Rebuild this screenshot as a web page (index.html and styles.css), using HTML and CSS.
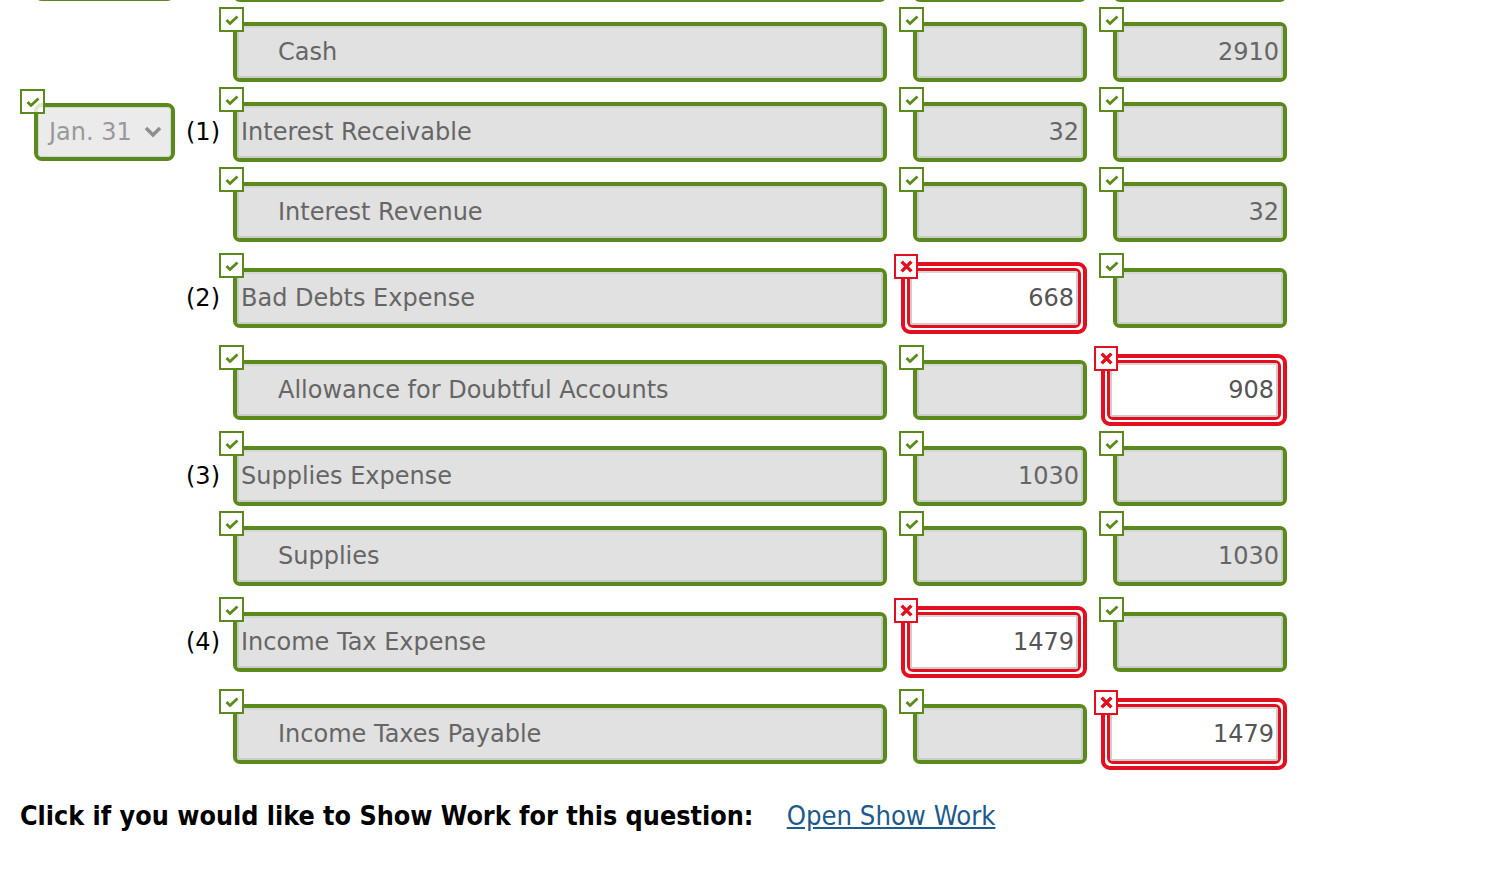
FILE: index.html
```html
<!DOCTYPE html>
<html lang="en">
<head>
<meta charset="UTF-8">
<title>Journal Entries</title>
<link rel="stylesheet" href="styles.css">
</head>
<body>

<div class="journal">

  <!-- previous entry, scrolled out of view except its bottom edge -->
  <div class="entry">
    <div class="date-cell">
      <div class="pick"><div class="pick-in"></div></div>
    </div>
    <div class="ref"></div>
    <div class="field"><div class="box"></div></div>
    <div class="amt"><div class="field num"><div class="box"></div></div></div>
    <div class="amt"><div class="field num"><div class="box"></div></div></div>
  </div>

  <div class="entry">
    <div class="date-cell"></div>
    <div class="ref"></div>
    <div class="field"><span class="mark"><svg viewBox="0 0 14 10"><polyline points="1.5,5 5,8.5 12.5,1.5"/></svg></span><div class="box credit">Cash</div></div>
    <div class="amt"><div class="field num"><span class="mark"><svg viewBox="0 0 14 10"><polyline points="1.5,5 5,8.5 12.5,1.5"/></svg></span><div class="box"></div></div></div>
    <div class="amt"><div class="field num"><span class="mark"><svg viewBox="0 0 14 10"><polyline points="1.5,5 5,8.5 12.5,1.5"/></svg></span><div class="box">2910</div></div></div>
  </div>

  <div class="entry">
    <div class="date-cell">
      <div class="pick"><span class="mark faded"><svg viewBox="0 0 14 10"><polyline points="1.5,5 5,8.5 12.5,1.5"/></svg></span><div class="pick-in">Jan. 31 <svg class="chev" viewBox="0 0 18 12"><polyline points="2,2 9,9 16,2"/></svg></div></div>
    </div>
    <div class="ref">(1)</div>
    <div class="field"><span class="mark"><svg viewBox="0 0 14 10"><polyline points="1.5,5 5,8.5 12.5,1.5"/></svg></span><div class="box">Interest Receivable</div></div>
    <div class="amt"><div class="field num"><span class="mark"><svg viewBox="0 0 14 10"><polyline points="1.5,5 5,8.5 12.5,1.5"/></svg></span><div class="box">32</div></div></div>
    <div class="amt"><div class="field num"><span class="mark"><svg viewBox="0 0 14 10"><polyline points="1.5,5 5,8.5 12.5,1.5"/></svg></span><div class="box"></div></div></div>
  </div>

  <div class="entry">
    <div class="date-cell"></div>
    <div class="ref"></div>
    <div class="field"><span class="mark"><svg viewBox="0 0 14 10"><polyline points="1.5,5 5,8.5 12.5,1.5"/></svg></span><div class="box credit">Interest Revenue</div></div>
    <div class="amt"><div class="field num"><span class="mark"><svg viewBox="0 0 14 10"><polyline points="1.5,5 5,8.5 12.5,1.5"/></svg></span><div class="box"></div></div></div>
    <div class="amt"><div class="field num"><span class="mark"><svg viewBox="0 0 14 10"><polyline points="1.5,5 5,8.5 12.5,1.5"/></svg></span><div class="box">32</div></div></div>
  </div>

  <div class="entry">
    <div class="date-cell"></div>
    <div class="ref">(2)</div>
    <div class="field"><span class="mark"><svg viewBox="0 0 14 10"><polyline points="1.5,5 5,8.5 12.5,1.5"/></svg></span><div class="box">Bad Debts Expense</div></div>
    <div class="amt"><div class="field num bad"><span class="mark"><svg viewBox="0 0 12 12"><path d="M1.5 1.5 L10.5 10.5 M10.5 1.5 L1.5 10.5"/></svg></span><div class="ring"><div class="box">668</div></div></div></div>
    <div class="amt"><div class="field num"><span class="mark"><svg viewBox="0 0 14 10"><polyline points="1.5,5 5,8.5 12.5,1.5"/></svg></span><div class="box"></div></div></div>
  </div>

  <div class="entry">
    <div class="date-cell"></div>
    <div class="ref"></div>
    <div class="field"><span class="mark"><svg viewBox="0 0 14 10"><polyline points="1.5,5 5,8.5 12.5,1.5"/></svg></span><div class="box credit">Allowance for Doubtful Accounts</div></div>
    <div class="amt"><div class="field num"><span class="mark"><svg viewBox="0 0 14 10"><polyline points="1.5,5 5,8.5 12.5,1.5"/></svg></span><div class="box"></div></div></div>
    <div class="amt"><div class="field num bad"><span class="mark"><svg viewBox="0 0 12 12"><path d="M1.5 1.5 L10.5 10.5 M10.5 1.5 L1.5 10.5"/></svg></span><div class="ring"><div class="box">908</div></div></div></div>
  </div>

  <div class="entry">
    <div class="date-cell"></div>
    <div class="ref">(3)</div>
    <div class="field"><span class="mark"><svg viewBox="0 0 14 10"><polyline points="1.5,5 5,8.5 12.5,1.5"/></svg></span><div class="box">Supplies Expense</div></div>
    <div class="amt"><div class="field num"><span class="mark"><svg viewBox="0 0 14 10"><polyline points="1.5,5 5,8.5 12.5,1.5"/></svg></span><div class="box">1030</div></div></div>
    <div class="amt"><div class="field num"><span class="mark"><svg viewBox="0 0 14 10"><polyline points="1.5,5 5,8.5 12.5,1.5"/></svg></span><div class="box"></div></div></div>
  </div>

  <div class="entry">
    <div class="date-cell"></div>
    <div class="ref"></div>
    <div class="field"><span class="mark"><svg viewBox="0 0 14 10"><polyline points="1.5,5 5,8.5 12.5,1.5"/></svg></span><div class="box credit">Supplies</div></div>
    <div class="amt"><div class="field num"><span class="mark"><svg viewBox="0 0 14 10"><polyline points="1.5,5 5,8.5 12.5,1.5"/></svg></span><div class="box"></div></div></div>
    <div class="amt"><div class="field num"><span class="mark"><svg viewBox="0 0 14 10"><polyline points="1.5,5 5,8.5 12.5,1.5"/></svg></span><div class="box">1030</div></div></div>
  </div>

  <div class="entry">
    <div class="date-cell"></div>
    <div class="ref">(4)</div>
    <div class="field"><span class="mark"><svg viewBox="0 0 14 10"><polyline points="1.5,5 5,8.5 12.5,1.5"/></svg></span><div class="box">Income Tax Expense</div></div>
    <div class="amt"><div class="field num bad"><span class="mark"><svg viewBox="0 0 12 12"><path d="M1.5 1.5 L10.5 10.5 M10.5 1.5 L1.5 10.5"/></svg></span><div class="ring"><div class="box">1479</div></div></div></div>
    <div class="amt"><div class="field num"><span class="mark"><svg viewBox="0 0 14 10"><polyline points="1.5,5 5,8.5 12.5,1.5"/></svg></span><div class="box"></div></div></div>
  </div>

  <div class="entry">
    <div class="date-cell"></div>
    <div class="ref"></div>
    <div class="field"><span class="mark"><svg viewBox="0 0 14 10"><polyline points="1.5,5 5,8.5 12.5,1.5"/></svg></span><div class="box credit">Income Taxes Payable</div></div>
    <div class="amt"><div class="field num"><span class="mark"><svg viewBox="0 0 14 10"><polyline points="1.5,5 5,8.5 12.5,1.5"/></svg></span><div class="box"></div></div></div>
    <div class="amt"><div class="field num bad"><span class="mark"><svg viewBox="0 0 12 12"><path d="M1.5 1.5 L10.5 10.5 M10.5 1.5 L1.5 10.5"/></svg></span><div class="ring"><div class="box">1479</div></div></div></div>
  </div>

</div>

<p class="showwork">Click if you would like to Show Work for this question: <a href="#" class="showwork-link">Open Show Work</a></p>

</body>
</html>
```

FILE: styles.css
```css
body {
    margin: 0;
    background: #fff;
    font-family: "DejaVu Sans", Verdana, sans-serif;
  }
  .journal {
    margin-top: -68px;
    padding-left: 34px;
  }
  .entry {
    display: grid;
    grid-template-columns: 141px 58px 654px 200px 200px;
    align-items: center;
    padding: 10px 0;
  }
  .ref {
    text-align: right;
    padding-right: 13px;
    font-size: 24px;
    color: #000;
  }
  .amt {
    display: flex;
    justify-content: flex-end;
  }
  .field {
    position: relative;
    border: 4px solid #5a8a1c;
    border-radius: 7px;
  }
  .field .box {
    height: 48px;
    border: 2px solid #cbcbcb;
    border-top-color: #d6d6d6;
    border-radius: 3px;
    background: #e1e1e1;
    color: #666;
    font-size: 24px;
    line-height: 48px;
    padding: 0 2px;
    white-space: nowrap;
  }
  .field .box.credit {
    padding-left: 39px;
  }
  .field.num .box {
    width: 158px;
    text-align: right;
  }
  .field.bad {
    border-color: #e30f1f;
    border-radius: 9px;
    padding: 2px;
    background: #fff;
  }
  .field.bad .ring {
    border: 3px solid #e30f1f;
    border-radius: 6px;
  }
  .field.bad .box {
    width: 160px;
    height: 50px;
    line-height: 50px;
    background: #fff;
    color: #555;
  }
  /* check / cross badges */
  .mark {
    position: absolute;
    left: -18px;
    top: -19px;
    z-index: 2;
    width: 21px;
    height: 21px;
    border: 2px solid #5a8a1c;
    background: #fff;
    display: flex;
    align-items: center;
    justify-content: center;
  }
  .mark svg {
    width: 14px;
    height: 10px;
    fill: none;
    stroke: #5a8a1c;
    stroke-width: 2.8;
  }
  .mark.faded {
    background: rgba(255,255,255,0.8);
  }
  .field.bad .mark {
    left: -11px;
    top: -12px;
    width: 20px;
    border-color: #e30f1f;
  }
  .field.bad .mark svg {
    width: 13px;
    height: 13px;
    stroke: #e30f1f;
    stroke-width: 3.2;
  }
  /* date dropdown */
  .pick {
    position: relative;
    width: 133px;
    height: 50px;
    border: 4px solid #5a8a1c;
    border-radius: 8px;
  }
  .pick .mark {
    left: -18px;
    top: -18px;
  }
  .pick-in {
    height: 48px;
    border: 1px solid #d4d4d4;
    border-radius: 4px;
    background: #ebebeb;
    color: #999;
    font-size: 24px;
    line-height: 48px;
    padding-left: 10px;
    display: flex;
    align-items: center;
    gap: 12px;
  }
  .chev {
    width: 18px;
    height: 12px;
    fill: none;
    stroke: #8e8e8e;
    stroke-width: 3.5;
  }
  .showwork {
    margin: 20px 0 0;
    padding-left: 20px;
    font-family: "DejaVu Sans Condensed", "DejaVu Sans", sans-serif;
    font-stretch: condensed;
    font-weight: bold;
    font-size: 26.7px;
    color: #000;
  }
  .showwork-link {
    margin-left: 25px;
    font-weight: normal;
    font-size: 27.2px;
    color: #1d5a8c;
    text-decoration: underline;
  }
```
